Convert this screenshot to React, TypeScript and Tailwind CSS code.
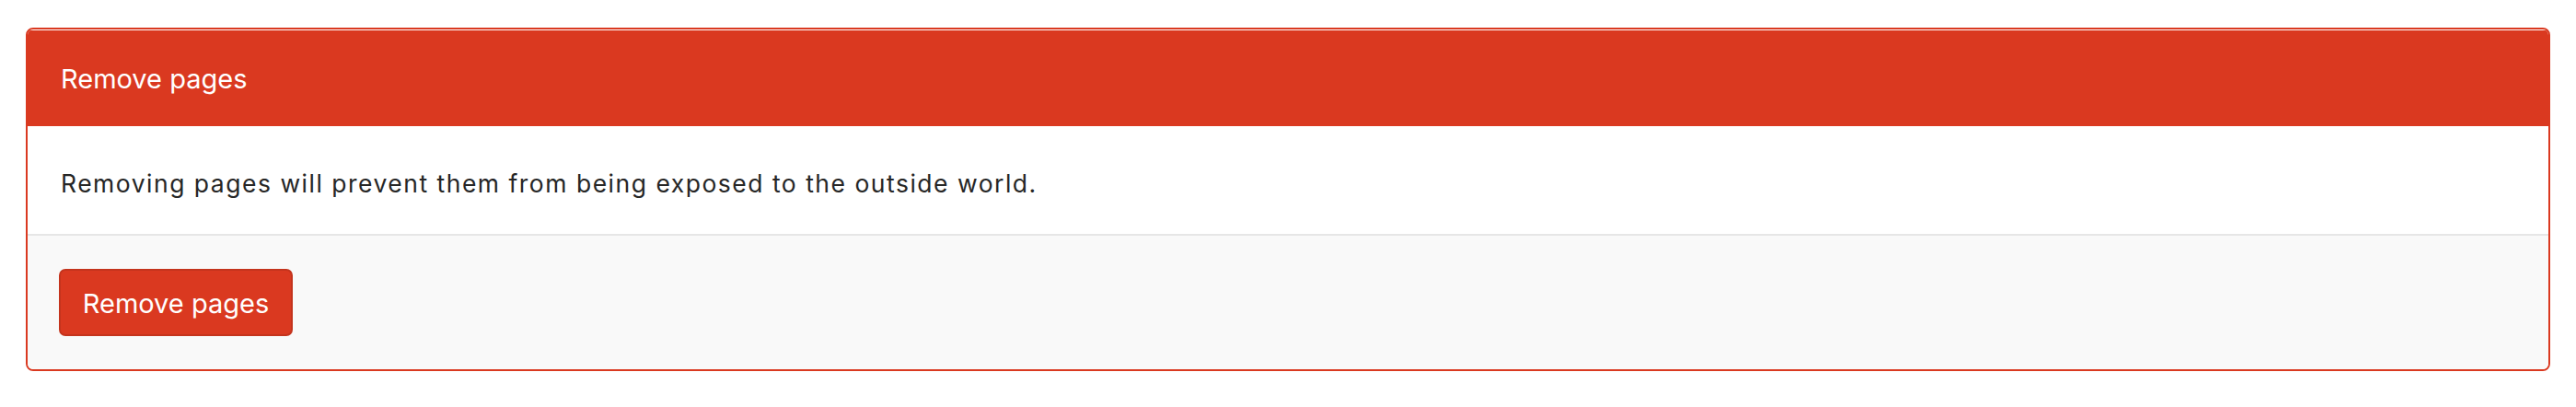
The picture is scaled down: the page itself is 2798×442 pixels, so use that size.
import React from "react";

export default function App() {
  return (
    <div className="w-[2798px] h-[442px] bg-white px-[28px] pt-[30px]" style={{ fontFamily: "Inter, 'Noto Sans', sans-serif" }}>
      <div className="border-2 border-[#da3920] rounded-[8px] overflow-hidden bg-white">
        <div className="h-[105px] bg-[#da3920] border-t border-white flex items-center px-[36px]">
          <span className="text-white text-[29px] leading-none">Remove pages</span>
        </div>
        <div className="h-[119px] flex items-center px-[36px] pt-[8px] border-b-2 border-[#e6e6e6]">
          <p className="text-[#262626] text-[26.5px] leading-none tracking-[1.5px]">Removing pages will prevent them from being exposed to the outside world.</p>
        </div>
        <div className="h-[145px] bg-[#f9f9f9] flex items-center px-[34px]">
          <button className="w-[254px] h-[73px] bg-[#da3920] border-2 border-[#c4341d] rounded-[7px] text-white text-[29px] leading-none flex items-center justify-center pt-[2px]">
            Remove pages
          </button>
        </div>
      </div>
    </div>
  );
}
